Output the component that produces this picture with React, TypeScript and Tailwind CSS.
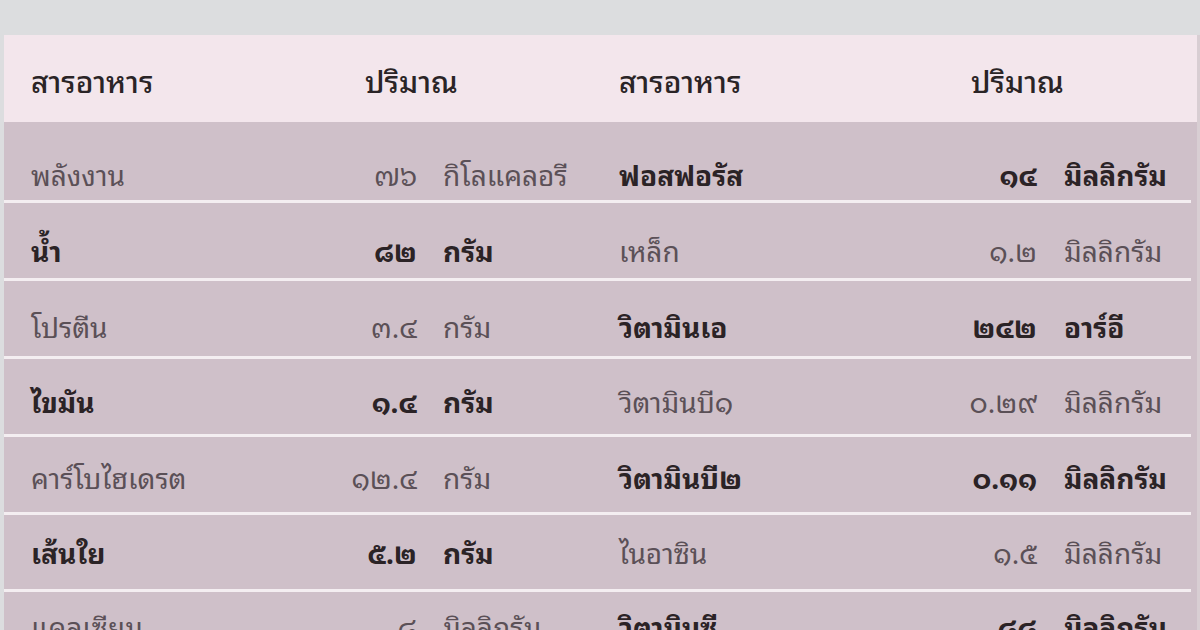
import React from "react";

type Row = {
  n1: string; v1: string; u1: string; b1: boolean;
  n2: string; v2: string; u2: string; b2: boolean;
  pb: string;
};

const rows: Row[] = [
  { n1: "พลังงาน", v1: "๗๖", u1: "กิโลแคลอรี", b1: false, n2: "ฟอสฟอรัส", v2: "๑๔", u2: "มิลลิกรัม", b2: true, pb: "pb-[6px] h-[81px]" },
  { n1: "น้ำ", v1: "๘๒", u1: "กรัม", b1: true, n2: "เหล็ก", v2: "๑.๒", u2: "มิลลิกรัม", b2: false, pb: "pb-[8px] h-[78px]" },
  { n1: "โปรตีน", v1: "๓.๔", u1: "กรัม", b1: false, n2: "วิตามินเอ", v2: "๒๔๒", u2: "อาร์อี", b2: true, pb: "pb-[10px] h-[78px]" },
  { n1: "ไขมัน", v1: "๑.๔", u1: "กรัม", b1: true, n2: "วิตามินบี๑", v2: "๐.๒๙", u2: "มิลลิกรัม", b2: false, pb: "pb-[13px] h-[78px]" },
  { n1: "คาร์โบไฮเดรต", v1: "๑๒.๔", u1: "กรัม", b1: false, n2: "วิตามินบี๒", v2: "๐.๑๑", u2: "มิลลิกรัม", b2: true, pb: "pb-[15px] h-[78px]" },
  { n1: "เส้นใย", v1: "๕.๒", u1: "กรัม", b1: true, n2: "ไนอาซิน", v2: "๑.๕", u2: "มิลลิกรัม", b2: false, pb: "pb-[17px] h-[77px]" },
  { n1: "แคลเซียม", v1: "๘", u1: "มิลลิกรัม", b1: false, n2: "วิตามินซี", v2: "๘๘", u2: "มิลลิกรัม", b2: true, pb: "pb-[20px] h-[77px]" },
];

const font = {
  fontFamily:
    '"Noto Sans Thai Looped", "Noto Sans Thai", "Loma", "Garuda", "Tlwg Typo", "DejaVu Sans", sans-serif',
};

function cls(bold: boolean) {
  return bold ? "font-bold text-[#2b2326]" : "font-normal text-[#5b5057]";
}

export default function App() {
  return (
    <div className="w-[1200px] h-[630px] overflow-hidden bg-[#dcdddf] flex flex-col" style={font}>
      <div className="h-[35px] shrink-0" />
      <div className="flex flex-1 min-h-0">
        <div className="w-[4px] shrink-0" />
        <div className="flex-1 flex flex-col bg-[#cfc0c9]">
          <div className="h-[87px] shrink-0 bg-[#f3e6ec] grid grid-cols-[334px_254px_352px_1fr] pl-[27px] items-end pb-[22px] text-[30px] leading-[40px] font-medium text-[#2a2426]">
            <div>สารอาหาร</div>
            <div>ปริมาณ</div>
            <div>สารอาหาร</div>
            <div>ปริมาณ</div>
          </div>
          {rows.map((r, i) => (
            <div
              key={i}
              className={`${r.pb} shrink-0 border-b-[3px] border-[#f4eef1] mr-[6px] grid grid-cols-[290px_96px_26px_176px_318px_100px_27px_1fr] pl-[27px] items-end text-[28px] leading-[40px]`}
            >
              <div className={cls(r.b1)}>{r.n1}</div>
              <div className={`${cls(r.b1)} text-right`}>{r.v1}</div>
              <div />
              <div className={`${cls(r.b1)} whitespace-nowrap`}>{r.u1}</div>
              <div className={cls(r.b2)}>{r.n2}</div>
              <div className={`${cls(r.b2)} text-right`}>{r.v2}</div>
              <div />
              <div className={`${cls(r.b2)} whitespace-nowrap`}>{r.u2}</div>
            </div>
          ))}
        </div>
        <div className="w-[3px] shrink-0 bg-[#d8ced3]" />
      </div>
    </div>
  );
}
